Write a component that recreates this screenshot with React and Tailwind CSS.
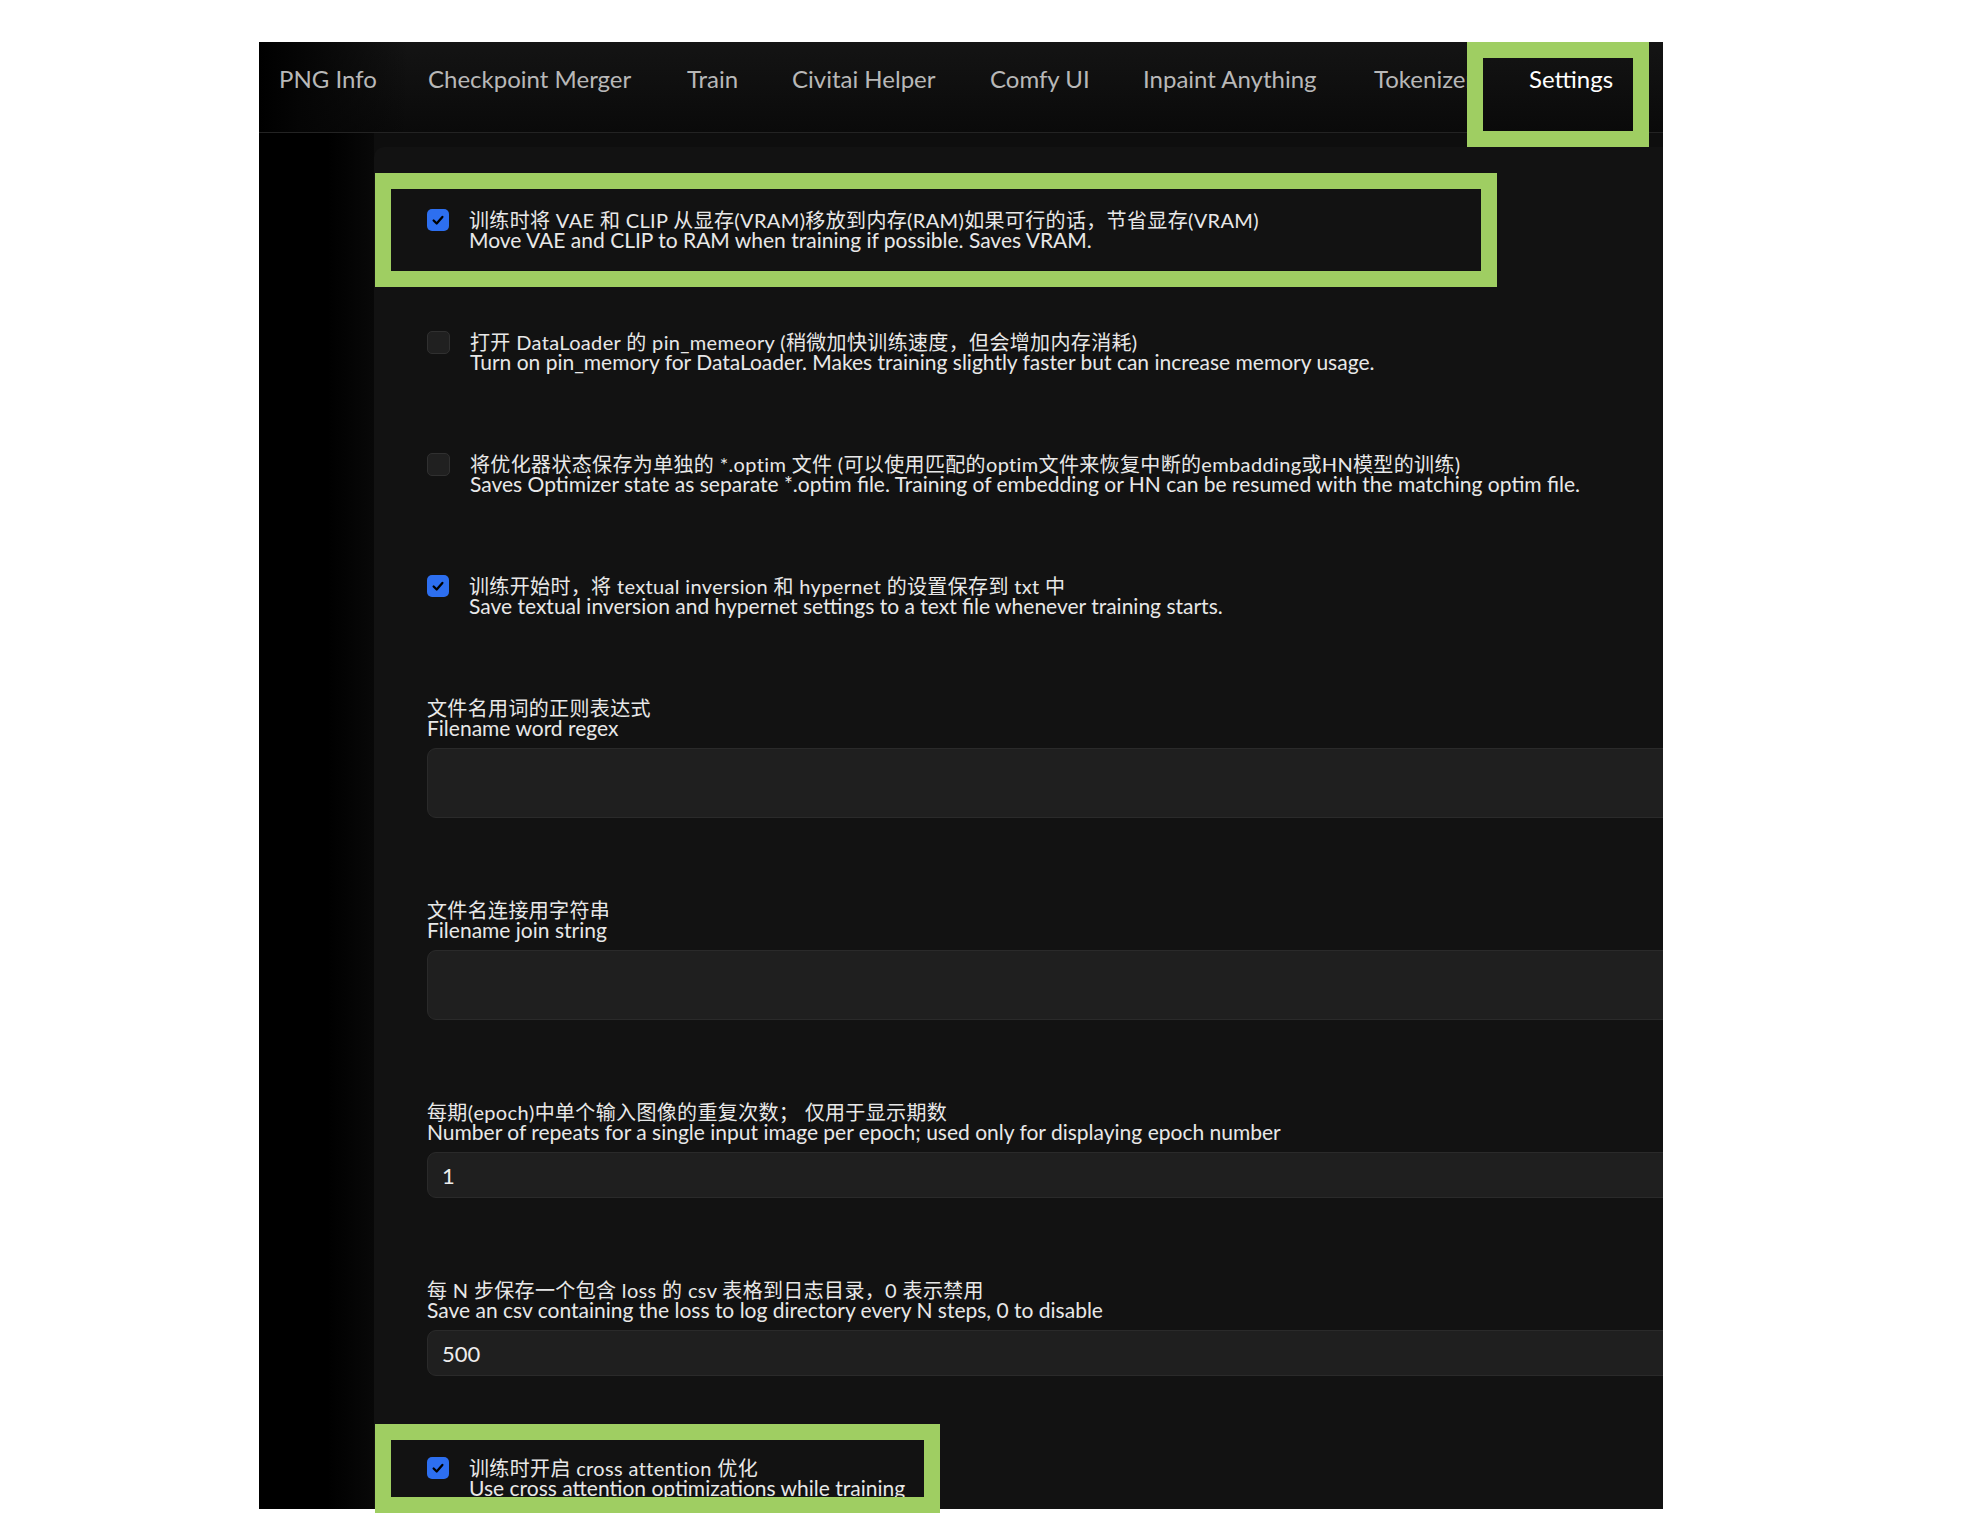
import React from "react";

const tabs = [
  { label: "PNG Info", w: "w-[149px]" },
  { label: "Checkpoint Merger", w: "w-[259px]" },
  { label: "Train", w: "w-[105px]" },
  { label: "Civitai Helper", w: "w-[198px]" },
  { label: "Comfy UI", w: "w-[153px]" },
  { label: "Inpaint Anything", w: "w-[231px]" },
  { label: "Tokenizer", w: "w-[155px]" },
];

function Checkbox({ checked }) {
  if (checked) {
    return (
      <div className="mt-[-1px] flex h-[22px] w-[22px] shrink-0 items-center justify-center rounded-[5px] bg-[#2d6ff0]">
        <svg width="14" height="14" viewBox="0 0 16 16" fill="none">
          <polyline points="3,8.5 6.5,12 13,4.5" stroke="#000" strokeWidth="2.6" strokeLinecap="round" strokeLinejoin="round" />
        </svg>
      </div>
    );
  }
  return <div className="mt-[-1px] h-[23px] w-[23px] shrink-0 rounded-[5px] border border-[#303030] bg-[#202020]" />;
}

function TwoLines({ zh, en }) {
  return (
    <div className="whitespace-nowrap leading-[20px] text-[#e8e8e8]">
      <div className="text-[20px] tracking-[0.35px]">{zh}</div>
      <div className="text-[21px]">{en}</div>
    </div>
  );
}

function CheckRow({ checked, zh, en }) {
  return (
    <div className="flex items-start gap-[20px]">
      <Checkbox checked={checked} />
      <TwoLines zh={zh} en={en} />
    </div>
  );
}

export default function App() {
  return (
    <div className="relative h-[1538px] w-[1980px] overflow-hidden bg-white pl-[259px] pt-[42px] font-['Lato','Noto_Sans_CJK_SC',sans-serif]">
      <div className="flex h-[1467px] w-[1404px] flex-col overflow-hidden bg-black">
        {/* tab bar */}
        <div className="flex h-[91px] shrink-0 items-start border-b border-[#232323] bg-[linear-gradient(to_right,#000_0px,#050505_40px,transparent_150px),linear-gradient(to_bottom,#141414,#0a0a0a)] pl-[20px] pt-[22px]">
          {tabs.map((t) => (
            <div key={t.label} className={`${t.w} shrink-0 whitespace-nowrap text-[24px] leading-[30px] text-[#b8b8b8]`}>
              {t.label}
            </div>
          ))}
          <div className="shrink-0 whitespace-nowrap text-[24px] leading-[30px] text-white">Settings</div>
        </div>

        {/* main */}
        <div className="flex flex-1">
          <div className="w-[115px] shrink-0 bg-[linear-gradient(to_right,#000_60%,#080808)]" />
          <div className="flex-1 bg-[#0e0e0e] pt-[14px]">
            <div className="flex h-full flex-col gap-[82px] rounded-tl-[10px] bg-[#121212] pl-[53px] pt-[63px]">
              <CheckRow
                checked
                zh="训练时将 VAE 和 CLIP 从显存(VRAM)移放到内存(RAM)如果可行的话，节省显存(VRAM)"
                en="Move VAE and CLIP to RAM when training if possible. Saves VRAM."
              />
              <CheckRow
                zh="打开 DataLoader 的 pin_memeory (稍微加快训练速度，但会增加内存消耗)"
                en="Turn on pin_memory for DataLoader. Makes training slightly faster but can increase memory usage."
              />
              <CheckRow
                zh="将优化器状态保存为单独的 *.optim 文件 (可以使用匹配的optim文件来恢复中断的embadding或HN模型的训练)"
                en="Saves Optimizer state as separate *.optim file. Training of embedding or HN can be resumed with the matching optim file."
              />
              <CheckRow
                checked
                zh="训练开始时，将 textual inversion 和 hypernet 的设置保存到 txt 中"
                en="Save textual inversion and hypernet settings to a text file whenever training starts."
              />
              <div>
                <TwoLines zh="文件名用词的正则表达式" en="Filename word regex" />
                <div className="mt-[10px] h-[70px] w-[1400px] rounded-[9px] border border-[#2a2a2a] bg-[#1f1f1f]" />
              </div>
              <div>
                <TwoLines zh="文件名连接用字符串" en="Filename join string" />
                <div className="mt-[10px] h-[70px] w-[1400px] rounded-[9px] border border-[#2a2a2a] bg-[#1f1f1f]" />
              </div>
              <div>
                <TwoLines
                  zh="每期(epoch)中单个输入图像的重复次数； 仅用于显示期数"
                  en="Number of repeats for a single input image per epoch; used only for displaying epoch number"
                />
                <div className="mt-[10px] flex h-[46px] w-[1400px] items-center rounded-[9px] border border-[#2a2a2a] bg-[#1f1f1f] pl-[14px] text-[22px] text-[#ededed]">
                  1
                </div>
              </div>
              <div>
                <TwoLines
                  zh="每 N 步保存一个包含 loss 的 csv 表格到日志目录，0 表示禁用"
                  en="Save an csv containing the loss to log directory every N steps, 0 to disable"
                />
                <div className="mt-[10px] flex h-[46px] w-[1400px] items-center rounded-[9px] border border-[#2a2a2a] bg-[#1f1f1f] pl-[14px] text-[22px] text-[#ededed]">
                  500
                </div>
              </div>
              <CheckRow
                checked
                zh="训练时开启 cross attention 优化"
                en="Use cross attention optimizations while training"
              />
            </div>
          </div>
        </div>
      </div>

      {/* annotation highlight boxes */}
      <div className="pointer-events-none absolute left-[375px] top-[173px] h-[114px] w-[1122px] border-[16px] border-[#9fce62]" />
      <div className="pointer-events-none absolute left-[1467px] top-[42px] h-[105px] w-[182px] border-[16px] border-[#9fce62]" />
      <div className="pointer-events-none absolute left-[375px] top-[1424px] h-[89px] w-[565px] border-[16px] border-[#9fce62]" />
    </div>
  );
}
